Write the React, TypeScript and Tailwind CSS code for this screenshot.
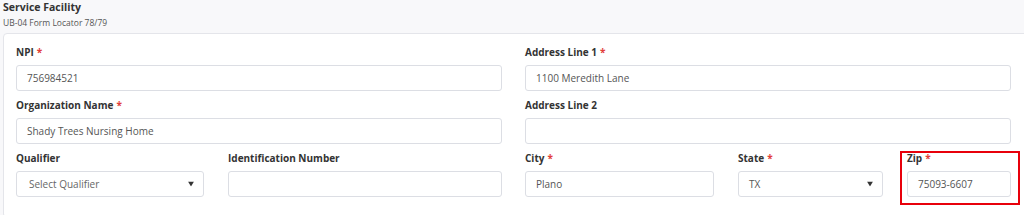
const font = { fontFamily: '"Open Sans", "Noto Sans", sans-serif' };

type FieldProps = {
  label: string;
  required?: boolean;
  value?: string;
  placeholder?: string;
  select?: boolean;
  className?: string;
};

const Caret = () => (
  <svg width="6" height="5" viewBox="0 0 6 5" className="absolute right-[9px] top-1/2 -translate-y-1/2">
    <path d="M0 0H6L3 5Z" fill="#333" />
  </svg>
);

const Field = ({ label, required, value, placeholder, select, className }: FieldProps) => (
  <div className={className}>
    <div className="mb-[6px] text-[10px] font-bold leading-[14px] text-[#333]">
      {label}
      {required && <span className="ml-[3px] text-[#e2403b]">*</span>}
    </div>
    <div className="relative flex h-[26px] items-center rounded-[3px] border border-[#dcdee4] bg-white pl-[10px] text-[10px] text-[#555]">
      {value ?? <span className="pl-[2px] text-[#666]">{placeholder}</span>}
      {select && <Caret />}
    </div>
  </div>
);

export default function App() {
  return (
    <div className="h-[215px] w-[1024px] overflow-hidden bg-[#f8f8fa] pl-[3px]" style={font}>
      <div className="text-[10.5px] font-bold leading-[14px] text-[#333]">Service Facility</div>
      <div className="mt-[3px] text-[8.5px] leading-[12px] text-[#555]">UB-04 Form Locator 78/79</div>
      <div className="mt-[4px] w-[1040px] rounded-[4px] border border-[#e4e5ea] bg-white pb-[20px] pl-[12px] pt-[11px]">
        <div className="flex gap-[23px]">
          <div className="flex w-[486px] flex-col gap-[7px]">
            <Field label="NPI" required value="756984521" />
            <Field label="Organization Name" required value="Shady Trees Nursing Home" />
            <div className="flex gap-[24px]">
              <Field label="Qualifier" placeholder="Select Qualifier" select className="w-[188px]" />
              <Field label="Identification Number" value="" className="flex-1" />
            </div>
          </div>
          <div className="flex w-[486px] flex-col gap-[7px]">
            <Field label="Address Line 1" required value="1100 Meredith Lane" />
            <Field label="Address Line 2" value="" />
            <div className="flex gap-[24px]">
              <Field label="City" required value="Plano" className="w-[189px]" />
              <Field label="State" required value="TX" select className="w-[145px]" />
              <div className="relative flex-1">
                <Field label="Zip" required value="75093-6607" />
                <div className="absolute -bottom-[8px] -left-[7px] -right-[9px] top-0 border-2 border-[#e8000b]" />
              </div>
            </div>
          </div>
        </div>
      </div>
    </div>
  );
}
